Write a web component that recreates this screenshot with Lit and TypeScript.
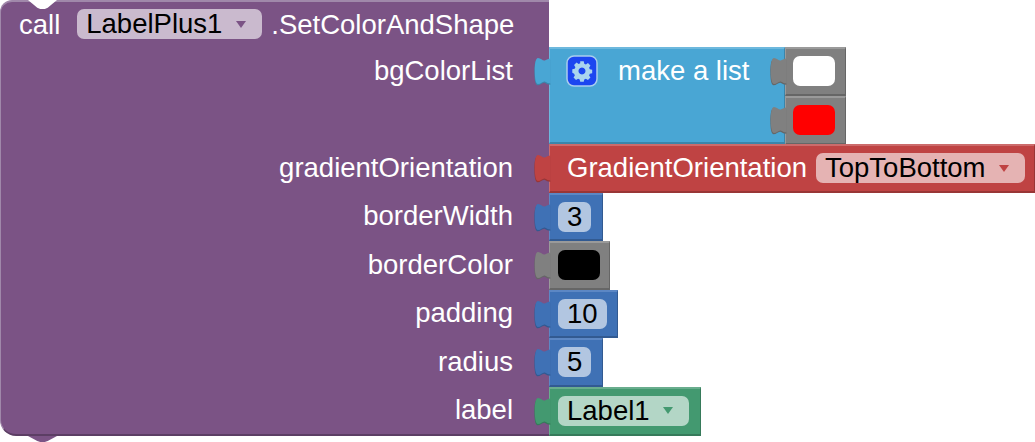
import { LitElement, html, css, svg } from "lit";
import { customElement } from "lit/decorators.js";

const TAB = "M16 3.500C13 3.500 12.500 4.500 10 5.500 8 6 6 3 3.200 3 1 3 0 8 0 16 0 24 1 29 3.200 29 6 29 8 26 10 26.500 12.500 27.500 13 28.500 16 28.500Z";

@customElement("puzzle-tab")
class PuzzleTab extends LitElement {
  static styles = css`
    :host {
      position: absolute;
      left: -16px;
      top: 6px;
      width: 17px;
      height: 32px;
    }
    svg {
      display: block;
    }
    .edge {
      fill: var(--dark);
    }
    .body {
      fill: var(--base);
    }
  `;

  render() {
    return html`<svg width="17" height="32" viewBox="0 0 17 32">
      ${svg`<path class="edge" transform="translate(.4 1.200)" d=${TAB}></path>
      <path class="body" transform="translate(.8 0)" d=${TAB}></path>`}
    </svg>`;
  }
}

@customElement("app-root")
class AppRoot extends LitElement {
  static styles = css`
    :host {
      display: block;
      width: 1035px;
      height: 442px;
      overflow: hidden;
      background: #fff;
      font-family: "Liberation Sans", Arial, sans-serif;
      font-size: 27.500px;
    }
    .row {
      display: flex;
      height: 48.600px;
    }
    .row.tall {
      height: 97px;
    }
    .row.head {
      height: 47px;
    }
    .side {
      position: relative;
      flex: none;
      box-sizing: border-box;
      width: 549px;
      display: flex;
      justify-content: flex-end;
      padding: 5.500px 36px 0 0;
      background: #7b5385;
      color: #fff;
      border-left: 1px solid #a088aa;
      line-height: 36px;
    }
    .head .side {
      justify-content: flex-start;
      align-items: flex-start;
      gap: 17px;
      padding: 7px 0 0 18px;
      border-top: 2px solid #a088aa;
      border-top-left-radius: 12px;
    }
    .head .side span {
      margin-top: -2px;
    }
    .head .side .method {
      margin-left: -8px;
    }
    .last .side {
      height: 49px;
      padding-top: 5px;
      border-bottom: 2px solid #5c3e64;
      border-bottom-left-radius: 16px;
    }
    .notch {
      position: absolute;
      left: 27px;
      top: -2px;
      width: 29px;
      height: 9px;
      background: #fff;
      clip-path: polygon(0 0, 100% 0, 68% 85%, 58% 100%, 42% 100%, 32% 85%);
    }
    .bump {
      position: absolute;
      left: 27px;
      bottom: -8px;
      width: 29px;
      height: 6px;
      background: #7b5385;
      clip-path: polygon(0 0, 100% 0, 68% 85%, 58% 100%, 42% 100%, 32% 85%);
    }
    .value {
      position: relative;
      box-sizing: border-box;
      height: 100%;
      display: flex;
      align-items: flex-start;
      padding: 7px 8px 0;
      color: #fff;
      background: var(--base);
      border-top: 2px solid var(--light);
      border-bottom: 2px solid var(--dark);
      border-right: 1px solid var(--dark);
      border-left: 1px solid var(--light);
    }
    .blue {
      --base: #3f71b5;
      --light: #5c87c4;
      --dark: #325a91;
    }
    .grey {
      --base: #808080;
      --light: #9a9a9a;
      --dark: #666;
      width: 61px;
    }
    .red {
      --base: #bf4343;
      --light: #cc6b6b;
      --dark: #993636;
      padding: 7px 9px 0 17px;
      gap: 9px;
      width: 486px;
    }
    .green {
      --base: #439970;
      --light: #69ad8d;
      --dark: #367a5a;
      width: 152px;
      padding-right: 11px;
    }
    .list {
      --base: #49a6d4;
      --light: #6db8dd;
      --dark: #3b85aa;
      width: 236px;
      padding-left: 16px;
    }
    .list .title {
      margin-left: 20px;
      line-height: 30px;
    }
    .gear {
      display: block;
      flex: none;
      width: 32px;
      height: 32px;
      margin-top: -1px;
    }
    .items {
      position: absolute;
      left: calc(100% + 1px);
      top: -2px;
      display: flex;
      flex-direction: column;
    }
    .items .value {
      height: 49px;
      padding-left: 7px;
    }
    .field {
      box-sizing: border-box;
      height: 30px;
      line-height: 30px;
      border-radius: 7px;
      padding: 0 9px;
      color: #000;
      background: rgba(255, 255, 255, 0.6);
      display: flex;
      align-items: center;
      white-space: nowrap;
    }
    .field.drop {
      padding: 0 16px 0 9px;
    }
    .arrow {
      width: 0;
      height: 0;
      margin-left: auto;
      border-left: 5px solid transparent;
      border-right: 5px solid transparent;
      border-top: 7px solid var(--tint);
    }
    .chip {
      flex: none;
      width: 42px;
      height: 30px;
      border-radius: 7px;
    }
  `;

  private tab() {
    return html`<puzzle-tab></puzzle-tab>`;
  }

  private number(v: string, w: number) {
    return html`<div class="value blue" style="width:${w}px">
      ${this.tab()}
      <div class="field">${v}</div>
    </div>`;
  }

  private color(c: string) {
    return html`<div class="value grey">
      ${this.tab()}
      <div class="chip" style="background:${c}"></div>
    </div>`;
  }

  render() {
    return html`
      <div class="row head">
        <div class="side">
          <i class="notch"></i>
          <span>call</span>
          <div class="field drop" style="--tint:#7b5385;width:185px">
            LabelPlus1<i class="arrow"></i>
          </div>
          <span class="method">.SetColorAndShape</span>
        </div>
      </div>
      <div class="row tall">
        <div class="side">bgColorList</div>
        <div class="value list">
          ${this.tab()}
          <svg class="gear" viewBox="0 0 32 32">
            <rect x="1" y="1" width="30" height="30" rx="7" fill="#1c46f0" stroke="#a9cdee" stroke-width="1.500"></rect>
            <path
              fill="#a9d4ee"
              fill-rule="evenodd"
              d="M14 7h4l.6 2.700 1.800.8 2.400-1.500 2.800 2.800-1.500 2.400.8 1.800 2.700.6v4l-2.700.6-.8 1.800 1.500 2.400-2.800 2.800-2.400-1.500-1.800.8-.6 2.700h-4l-.6-2.700-1.800-.8-2.400 1.500-2.800-2.800 1.500-2.400-.8-1.800L5 20v-4l2.700-.6.8-1.800L7 11.200l2.800-2.800 2.400 1.500 1.800-.8ZM16 14a4 4 0 1 0 .01 0Z"
              transform="translate(1.900 .2) scale(.88)"
            ></path>
          </svg>
          <span class="title">make a list</span>
          <div class="items">${this.color("#fff")}${this.color("#f00")}</div>
        </div>
      </div>
      <div class="row">
        <div class="side">gradientOrientation</div>
        <div class="value red">
          ${this.tab()}
          <span style="line-height:30px">GradientOrientation</span>
          <div class="field drop" style="--tint:#bf4343;flex:1">
            TopToBottom<i class="arrow"></i>
          </div>
        </div>
      </div>
      <div class="row">
        <div class="side">borderWidth</div>
        ${this.number("3", 54)}
      </div>
      <div class="row">
        <div class="side">borderColor</div>
        ${this.color("#000")}
      </div>
      <div class="row">
        <div class="side">padding</div>
        ${this.number("10", 69)}
      </div>
      <div class="row">
        <div class="side">radius</div>
        ${this.number("5", 54)}
      </div>
      <div class="row last">
        <div class="side">label<i class="bump"></i></div>
        <div class="value green">
          ${this.tab()}
          <div class="field drop" style="--tint:#439970;flex:1">Label1<i class="arrow"></i></div>
        </div>
      </div>
    `;
  }
}
